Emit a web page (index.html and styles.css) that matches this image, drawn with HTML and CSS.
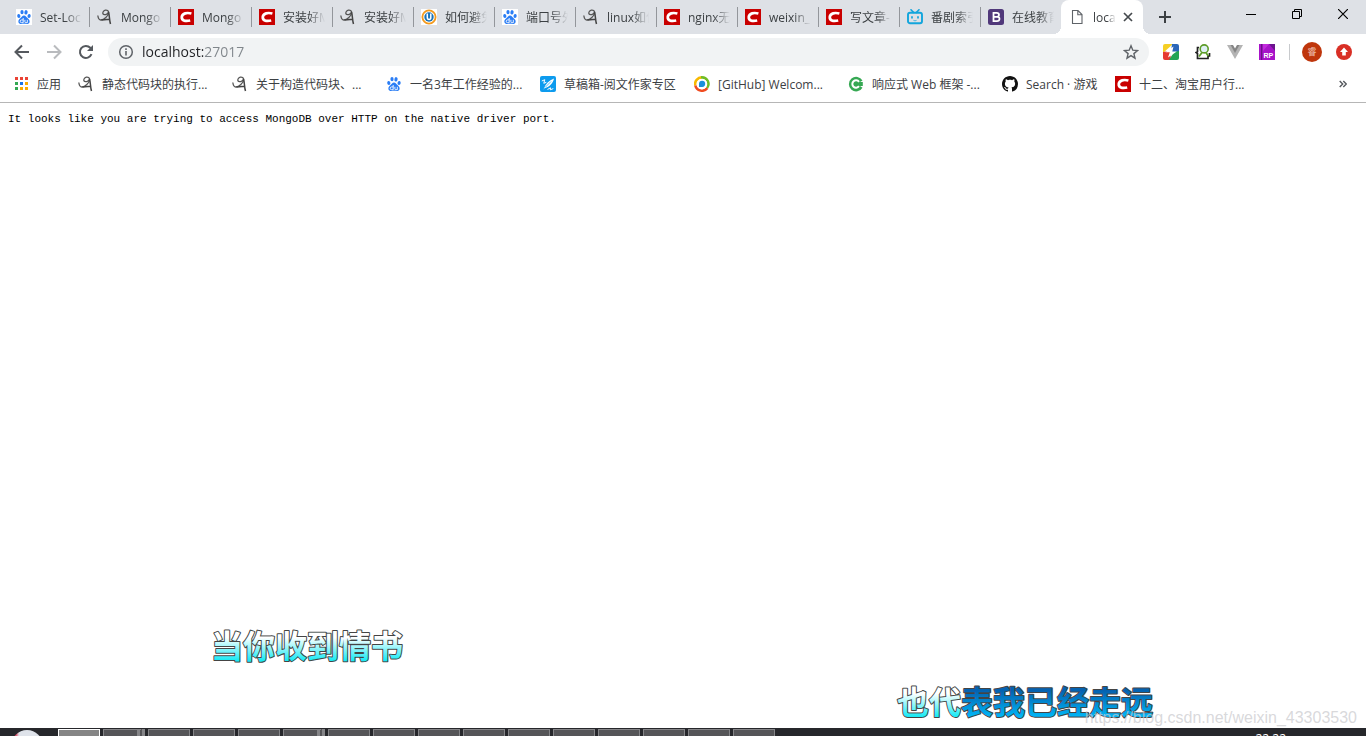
FILE: index.html
```html
<!DOCTYPE html>
<html lang="zh-CN">
<head>
<meta charset="utf-8">
<title>localhost:27017</title>
<link rel="stylesheet" href="styles.css">
</head>
<body>
<svg class="sprite" aria-hidden="true">
  <symbol id="baidu" viewBox="0 0 16 16">
    <g fill="#2a7df5">
      <ellipse cx="2.8" cy="7" rx="1.6" ry="2.1" transform="rotate(-10 2.8 7)"/>
      <ellipse cx="6" cy="3.1" rx="1.6" ry="2.2"/>
      <ellipse cx="10" cy="3.3" rx="1.6" ry="2.2" transform="rotate(12 10 3.3)"/>
      <ellipse cx="13.1" cy="7" rx="1.6" ry="2.1" transform="rotate(10 13.1 7)"/>
      <path d="M8 6.4c1.7 0 2.4 1.6 3.4 2.7 1.200 1.200 2.500 2 2.200 3.900-.3 1.800-2 2.200-3.300 2-1.500-.2-3-.2-4.600 0-1.300.2-3-.2-3.300-2-.3-1.900 1-2.700 2.200-3.900C5.600 8 6.300 6.400 8 6.400z"/>
    </g>
    <path d="M7.200 9v4.700H5.600a1.400 1.400 0 0 1 0-2.800h1.600M8.900 10.800v2c0 .7.300.9.900.9h1.500v-2.900" fill="none" stroke="#fff" stroke-width=".9"/>
  </symbol>
  <symbol id="scribble" viewBox="0 0 16 16">
    <path d="M.8 6.500c.4 2.800 1.600 4.600 3.200 4.500C6.800 10.800 11.600 7 11.600 3.700c0-1.900-1.600-2.900-3.300-2.500C6.400 1.700 5.300 3.600 6 4.900c.9 1.600 4.400.6 5.500-1.700" fill="none" stroke="#555" stroke-width="1.300"/>
    <path d="M11.500 3c1.200 3.500.7 8 2 12M4.500 11l8-.8" fill="none" stroke="#444" stroke-width="1.500"/>
  </symbol>
  <symbol id="csdn" viewBox="0 0 16 16">
    <path fill="#c90000" d="M0 0h16v16H0z"/>
    <path d="M13.400 4.500C9 3.300 4.300 4.200 3.800 7.800c-.4 3.500 3 4.900 8.400 3.700" fill="none" stroke="#fff" stroke-width="2.700"/>
  </symbol>
  <symbol id="ring" viewBox="0 0 16 16">
    <path fill="#fff" d="M0 0h16v16H0z"/>
    <circle cx="8" cy="8" r="6.600" fill="#fff" stroke="#f39a1e" stroke-width="1.800"/>
    <circle cx="8" cy="8" r="4.700" fill="#1872b8"/>
    <path d="M6.300 4.500v4c0 2.600 3.500 2.600 3.500 0v-4" fill="none" stroke="#fff" stroke-width="1.500"/>
  </symbol>
  <symbol id="bili" viewBox="0 0 16 16">
    <path d="M4 .8l2.500 2.600M12 .8L9.500 3.400" stroke="#12a5dc" stroke-width="1.600" stroke-linecap="round"/>
    <rect x="1" y="3.800" width="14" height="10.400" rx="2" fill="none" stroke="#12a5dc" stroke-width="1.900"/>
    <path d="M5 7.300v2.200M11 7.300v2.200" stroke="#12a5dc" stroke-width="1.700"/>
    <path d="M6.500 11.400q.8.700 1.500 0 .8.700 1.500 0" fill="none" stroke="#12a5dc" stroke-width=".8"/>
  </symbol>
  <symbol id="bootstrap" viewBox="0 0 16 16">
    <rect width="16" height="16" rx="2.500" fill="#50387a"/>
    <path d="M5.500 3.900h3.200c3 0 3 3.900.3 3.900H5.500h3.700c3.200 0 3 4.300-.3 4.300H5.500z" fill="none" stroke="#fff" stroke-width="1.800"/>
  </symbol>
  <symbol id="pen" viewBox="0 0 16 16">
    <rect width="16" height="16" rx="2" fill="#0d9bee"/>
    <path d="M4 12.500C5.500 8 9 4.500 14 2.500 13 7 9.800 10.800 4.800 12L3 14" fill="#fff"/>
    <path d="M5.500 11l5.500-5.500" stroke="#0d9bee" stroke-width=".7"/>
    <path d="M1.800 5l3-1.300-1 3.600 2.500-1M7.500 13.500l3-1.700-.2 2 3-1.200" fill="none" stroke="#fff"/>
  </symbol>
  <symbol id="swirl" viewBox="0 0 16 16">
    <path d="M1.300 9.500A6.700 6.700 0 0 1 8 1.400" fill="none" stroke="#f8b900" stroke-width="2.600"/>
    <path d="M7 1.400a6.600 6.600 0 0 1 6 10.600" fill="none" stroke="#71bd25" stroke-width="2.600"/>
    <path d="M1.300 9.500a6.900 6.900 0 0 0 12 2.700" fill="none" stroke="#f04b20" stroke-width="2.600"/>
    <circle cx="8" cy="8" r="5.200" fill="#fff"/>
    <path d="M5 11V7.800A3.100 3.100 0 1 1 8.200 11z" fill="#198fda"/>
  </symbol>
  <symbol id="greenc" viewBox="0 0 16 16">
    <path d="M14.500 4.500A7.300 7.300 0 1 0 14.500 11.800L12 10h2.800V6H12z" fill="#36a853"/>
    <path d="M11 5.800a3.700 3.700 0 1 0 0 4.400" fill="none" stroke="#fff" stroke-width="2"/>
  </symbol>
  <symbol id="github" viewBox="0 0 16 16">
    <path fill="#111" d="M8 0C3.580 0 0 3.580 0 8c0 3.540 2.290 6.530 5.470 7.590.4.070.55-.17.55-.38 0-.19-.01-.82-.01-1.490-2.010.37-2.530-.49-2.690-.94-.09-.23-.48-.94-.82-1.130-.28-.15-.68-.52-.01-.53.63-.01 1.080.58 1.230.82.72 1.210 1.870.87 2.330.66.07-.52.28-.87.51-1.070-1.780-.2-3.640-.89-3.640-3.950 0-.87.31-1.590.82-2.150-.08-.2-.36-1.020.08-2.120 0 0 .67-.21 2.200.82.64-.18 1.320-.27 2-.27s1.360.09 2 .27c1.530-1.040 2.200-.82 2.200-.82.44 1.100.16 1.920.08 2.120.51.56.82 1.270.82 2.150 0 3.070-1.870 3.750-3.650 3.950.29.25.54.73.54 1.480 0 1.070-.01 1.930-.01 2.200 0 .21.15.46.55.38A8 8 0 0 0 16 8c0-4.420-3.580-8-8-8z"/>
  </symbol>
  <symbol id="apps" viewBox="0 0 16 16">
    <path fill="#ea4335" d="M2 1h3v3H2zM7 1h3v3H7zM12 1h3v3h-3z"/>
    <path fill="#34a853" d="M2 6h3v3H2zM2 11h3v3H2z"/>
    <path fill="#1a73e8" d="M7 6h3v3H7z"/>
    <path fill="#fbab00" d="M12 6h3v3h-3zM7 11h3v3H7zM12 11h3v3h-3z"/>
  </symbol>
</svg>

<header class="chrome">
  <div class="tab-strip">
    <nav class="tabs" aria-label="标签页">
      <a class="tab" href="#"><svg class="icon on-white"><use href="#baidu"/></svg><span class="tab-title">Set-Loc</span></a>
      <a class="tab" href="#"><svg class="icon"><use href="#scribble"/></svg><span class="tab-title">Mongo</span></a>
      <a class="tab" href="#"><svg class="icon"><use href="#csdn"/></svg><span class="tab-title">Mongo</span></a>
      <a class="tab" href="#"><svg class="icon"><use href="#csdn"/></svg><span class="tab-title">安装好M</span></a>
      <a class="tab" href="#"><svg class="icon"><use href="#scribble"/></svg><span class="tab-title">安装好M</span></a>
      <a class="tab" href="#"><svg class="icon"><use href="#ring"/></svg><span class="tab-title">如何避免</span></a>
      <a class="tab" href="#"><svg class="icon on-white"><use href="#baidu"/></svg><span class="tab-title">端口号外</span></a>
      <a class="tab" href="#"><svg class="icon"><use href="#scribble"/></svg><span class="tab-title">linux如何</span></a>
      <a class="tab" href="#"><svg class="icon"><use href="#csdn"/></svg><span class="tab-title">nginx无</span></a>
      <a class="tab" href="#"><svg class="icon"><use href="#csdn"/></svg><span class="tab-title">weixin_</span></a>
      <a class="tab" href="#"><svg class="icon"><use href="#csdn"/></svg><span class="tab-title">写文章-</span></a>
      <a class="tab" href="#"><svg class="icon"><use href="#bili"/></svg><span class="tab-title">番剧索引</span></a>
      <a class="tab last" href="#"><svg class="icon"><use href="#bootstrap"/></svg><span class="tab-title">在线教育</span></a>
      <div class="tab active">
        <svg class="icon" viewBox="0 0 16 16"><path d="M3.500 1.500h5.500L13 5.500v9H3.500zM8.800 1.500v4.200H13" fill="none" stroke="#5f6368" stroke-width="1.100"/></svg>
        <span class="tab-title">localhost</span>
        <button class="tab-close" aria-label="关闭标签页"><svg viewBox="0 0 10 10"><path d="M1 1l8 8M9 1L1 9" stroke="#45494d" stroke-width="1.700"/></svg></button>
      </div>
      <button class="new-tab" aria-label="新标签页"><svg viewBox="0 0 12 12"><path d="M6 0v12M0 6h12" stroke="#3c4043" stroke-width="2"/></svg></button>
    </nav>
    <div class="window-controls">
      <button aria-label="最小化"><svg viewBox="0 0 10 10"><path d="M0 5.500h10" stroke="#000"/></svg></button>
      <button aria-label="还原"><svg viewBox="0 0 10 10"><path d="M.5 2.500h7v7h-7zM2.500 2.500v-2h7v7h-2" fill="none" stroke="#000"/></svg></button>
      <button aria-label="关闭"><svg viewBox="0 0 10 10"><path d="M0 0l10 10M10 0L0 10" stroke="#000" stroke-width="1.200"/></svg></button>
    </div>
  </div>

  <div class="toolbar">
    <button class="tool" aria-label="后退"><svg viewBox="0 0 16 16"><path d="M15 8H2M8 1.500L1.500 8 8 14.500" fill="none" stroke="#55595e" stroke-width="2"/></svg></button>
    <button class="tool" aria-label="前进"><svg viewBox="0 0 16 16"><path d="M1 8h13M8 1.500L14.500 8 8 14.500" fill="none" stroke="#b9bbbe" stroke-width="2"/></svg></button>
    <button class="tool" aria-label="重新加载"><svg viewBox="0 0 16 16"><path d="M13.500 10.200A6 6 0 1 1 12.300 3.800L14 5.500" fill="none" stroke="#55595e" stroke-width="2"/><path d="M15 1v6H9z" fill="#55595e"/></svg></button>
    <div class="omnibox">
      <svg class="info" viewBox="0 0 16 16"><circle cx="8" cy="8" r="6.300" fill="none" stroke="#5f6368" stroke-width="1.500"/><path d="M8 7v4.500M8 4.300V6" stroke="#5f6368" stroke-width="1.600"/></svg>
      <input class="url" type="text" value="localhost:27017" aria-label="地址栏">
      <button class="star" aria-label="添加书签"><svg viewBox="0 0 16 16"><path d="M8 1.800l1.800 4.400 4.700.4-3.600 3 1.100 4.600L8 11.700l-4 2.500 1.100-4.600-3.600-3 4.700-.4z" fill="none" stroke="#5f6368" stroke-width="1.400"/></svg></button>
    </div>
    <div class="extensions">
      <button aria-label="闪电扩展"><svg viewBox="0 0 16 16"><path fill="#f5cf25" d="M2 0h8L0 9V2a2 2 0 0 1 2-2z"/><path fill="#e63a31" d="M0 8l7-1 1 9H2a2 2 0 0 1-2-2z"/><path fill="#2b66b8" d="M9 0h5a2 2 0 0 1 2 2v7l-8-1z"/><path fill="#23a455" d="M16 7v7a2 2 0 0 1-2 2H6l5-8z"/><path fill="#fff" d="M10.500 2.500L2.500 8.300h4.300L5 13.500l8.800-6H9.300z"/></svg></button>
      <button aria-label="查找扩展"><svg viewBox="0 0 16 16"><path d="M4 3.500H2.500v4L1 8.500l1.500 1v5H13v-2.500h1.500V9" fill="none" stroke="#222" stroke-width="1.700"/><circle cx="9.200" cy="4.900" r="4" fill="#dff0f5" stroke="#5d9c28" stroke-width="1.600"/><path d="M7 8.500L4 12.500M11 8.800l2.300 3.200" stroke="#5d9c28" stroke-width="1.800"/></svg></button>
      <button aria-label="Vue"><svg viewBox="0 0 16 16"><path fill="#b4b4b4" d="M0 1h4l4 7 4-7h4L8 15z"/><path fill="#858585" d="M3.500 1H6l2 3.500L10 1h2.500L8 9z"/></svg></button>
      <button aria-label="Axure RP"><svg viewBox="0 0 16 16"><path fill="#a813c9" d="M0 0h16v16H0z"/><path fill="#c22bdc" d="M4 0h6L4 7z"/><path fill="#6c148e" d="M10 0h6v7z"/><path d="M2.700 0v16" stroke="#5c1375"/><text class="rp" x="4.500" y="14.200">RP</text></svg></button>
    </div>
    <div class="profile">
      <button class="avatar" aria-label="用户">睿</button>
      <button class="update" aria-label="更新"><svg viewBox="0 0 16 16"><circle cx="8" cy="8" r="8" fill="#d92f25"/><path fill="#fff" d="M8 3.500L12 8H9.800v3.500H6.200V8H4z"/></svg></button>
    </div>
  </div>

  <nav class="bookmarks" aria-label="书签">
    <a class="bookmark apps" href="#"><svg class="icon"><use href="#apps"/></svg><span>应用</span></a>
    <a class="bookmark" href="#"><svg class="icon"><use href="#scribble"/></svg><span>静态代码块的执行...</span></a>
    <a class="bookmark" href="#"><svg class="icon"><use href="#scribble"/></svg><span>关于构造代码块、...</span></a>
    <a class="bookmark" href="#"><svg class="icon"><use href="#baidu"/></svg><span>一名3年工作经验的...</span></a>
    <a class="bookmark" href="#"><svg class="icon"><use href="#pen"/></svg><span>草稿箱-阅文作家专区</span></a>
    <a class="bookmark" href="#"><svg class="icon"><use href="#swirl"/></svg><span>[GitHub] Welcom...</span></a>
    <a class="bookmark" href="#"><svg class="icon"><use href="#greenc"/></svg><span>响应式 Web 框架 -...</span></a>
    <a class="bookmark short" href="#"><svg class="icon"><use href="#github"/></svg><span>Search · 游戏</span></a>
    <a class="bookmark" href="#"><svg class="icon"><use href="#csdn"/></svg><span>十二、淘宝用户行...</span></a>
    <button class="more" aria-label="更多书签"><svg viewBox="0 0 8 8"><path d="M.7 1l3 3-3 3M4.300 1l3 3-3 3" fill="none" stroke="#55595e" stroke-width="1.400"/></svg></button>
  </nav>
</header>

<main class="page">
  <pre class="message">It looks like you are trying to access MongoDB over HTTP on the native driver port.</pre>
</main>

<footer class="taskbar">
  <button class="start" aria-label="开始"></button>
  <div class="tasks">
    <button class="task current" aria-label="窗口 1"></button>
    <button class="task stack" aria-label="窗口 2"></button>
    <button class="task" aria-label="窗口 3"></button>
    <button class="task" aria-label="窗口 4"></button>
    <button class="task" aria-label="窗口 5"></button>
    <button class="task stack" aria-label="窗口 6"></button>
    <button class="task" aria-label="窗口 7"></button>
    <button class="task" aria-label="窗口 8"></button>
    <button class="task" aria-label="窗口 9"></button>
    <button class="task" aria-label="窗口 10"></button>
    <button class="task" aria-label="窗口 11"></button>
    <button class="task" aria-label="窗口 12"></button>
    <button class="task" aria-label="窗口 13"></button>
    <button class="task" aria-label="窗口 14"></button>
    <button class="task" aria-label="窗口 15"></button>
    <button class="task" aria-label="窗口 16"></button>
  </div>
  <time class="clock">22:22</time>
</footer>

<svg class="lyric first" viewBox="0 0 200 44">
  <defs><linearGradient id="pale" gradientUnits="userSpaceOnUse" x1="0" y1="8" x2="0" y2="36"><stop offset=".2" stop-color="#fff"/><stop offset="1" stop-color="#1ceaf5"/></linearGradient></defs>
  <text x="4" y="34" fill="url(#pale)">当你收到情书</text>
</svg>
<svg class="lyric second" viewBox="0 0 264 44">
  <defs><linearGradient id="deep" gradientUnits="userSpaceOnUse" x1="0" y1="8" x2="0" y2="36"><stop offset=".1" stop-color="#0562b0"/><stop offset="1" stop-color="#00b4f5"/></linearGradient></defs>
  <text x="4" y="34"><tspan fill="url(#pale)">也代</tspan><tspan fill="url(#deep)">表我已经走远</tspan></text>
</svg>
<div class="watermark">https://blog.csdn.net/weixin_43303530</div>
</body>
</html>
```

FILE: styles.css
```css
* { box-sizing: border-box; }

body {
  margin: 0;
  min-height: 100vh;
  display: flex;
  flex-direction: column;
  position: relative;
  background: #fff;
  color: #3c4043;
  font: 12px/16px "Open Sans", "Noto Sans CJK SC", sans-serif;
}

button {
  display: flex;
  align-items: center;
  justify-content: center;
  padding: 0;
  border: 0;
  background: none;
  font: inherit;
}

a { color: inherit; text-decoration: none; }

.sprite { position: absolute; width: 0; height: 0; }
.icon { flex: none; width: 16px; height: 16px; }
.on-white { background: #fff; }

/* Tabs */
.tab-strip {
  display: flex;
  justify-content: space-between;
  height: 34px;
  background: #dee1e6;
}

.tabs { display: flex; flex: 1; min-width: 0; padding-left: 8px; }

.tab {
  display: flex;
  align-items: center;
  gap: 8px;
  flex: 0 1 81px;
  min-width: 0;
  padding: 0 7px 0 8px;
  position: relative;
}

.tab::after {
  content: "";
  position: absolute;
  right: -1px;
  top: 7px;
  width: 1px;
  height: 20px;
  background: #93969b;
}

.tab.last::after { display: none; }

.tab-title {
  flex: 1;
  min-width: 0;
  padding-top: 2px;
  overflow: hidden;
  white-space: nowrap;
  mask-image: linear-gradient(90deg, #000 60%, transparent);
}

.tab.active {
  flex-basis: 82px;
  background: #fff;
  border-radius: 8px 8px 0 0;
}

.tab.active::before,
.tab.active::after {
  content: "";
  position: absolute;
  top: auto;
  bottom: 0;
  width: 8px;
  height: 8px;
}

.tab.active::before { left: -8px; background: radial-gradient(circle at 0 0, transparent 8px, #fff 8px); }
.tab.active::after { right: -8px; background: radial-gradient(circle at 100% 0, transparent 8px, #fff 8px); }

.tab-close { flex: none; width: 16px; height: 16px; margin-left: -4px; }
.tab-close svg { width: 10px; height: 10px; }
.new-tab { width: 28px; height: 34px; margin-left: 8px; }
.new-tab svg { width: 12px; height: 12px; }

.window-controls { display: flex; }
.window-controls button { width: 46px; height: 28px; }
.window-controls svg { width: 10px; height: 10px; }

/* Toolbar */
.toolbar { display: flex; align-items: center; height: 36px; padding: 0 14px 0 6px; }
.tool { width: 32px; height: 28px; }
.tool svg { width: 16px; height: 16px; }

.omnibox {
  display: flex;
  align-items: center;
  gap: 8px;
  flex: 1;
  min-width: 0;
  height: 28px;
  margin-left: 6px;
  padding: 0 10px;
  border-radius: 14px;
  background: #f1f3f4;
}

.info, .star, .star svg { flex: none; width: 16px; height: 16px; }

.url {
  flex: 1;
  min-width: 0;
  padding: 0;
  border: 0;
  outline: 0;
  color: #202124;
  font: 14px/20px "Open Sans", sans-serif;
  background: linear-gradient(90deg, #202124 61px, #80868b 61px);
  background-clip: text;
  -webkit-text-fill-color: transparent;
}

.extensions {
  display: flex;
  align-items: center;
  gap: 16px;
  height: 16px;
  margin-left: 14px;
  padding-right: 14px;
  border-right: 1px solid #c8cacd;
}

.extensions svg { width: 16px; height: 16px; }
.rp { font: bold 7px "Liberation Sans", sans-serif; fill: #fff; }

.profile { display: flex; align-items: center; gap: 14px; margin-left: 12px; }
.avatar { width: 20px; height: 20px; border-radius: 50%; background: #bf360c; color: #f0c4b5; font-size: 9px; }
.update, .update svg { width: 16px; height: 16px; }

/* Bookmarks */
.bookmarks {
  display: flex;
  align-items: center;
  height: 33px;
  padding: 0 19px 4px 13px;
  border-bottom: 1px solid #b6b6b6;
}

.bookmark {
  display: flex;
  align-items: center;
  gap: 8px;
  flex: 0 1 154px;
  min-width: 0;
  white-space: nowrap;
}

.bookmark span { padding-top: 2px; }
.bookmark.apps { flex: 0 0 65px; gap: 8px; }
.bookmark.short { flex-basis: 113px; }
.more { margin-left: auto; }
.more svg { width: 8px; height: 8px; }

/* Page */
.page { flex: 1; padding: 8px; }
.message { margin: 0; color: #000; font: 11px/16px "Liberation Mono", monospace; white-space: pre-wrap; }

/* Floating lyrics and watermark */
.lyric { position: absolute; height: 44px; pointer-events: none; }
.lyric text {
  font: bold 32px "Noto Sans CJK SC", sans-serif;
  stroke: #444;
  stroke-width: 2px;
  stroke-linejoin: round;
  paint-order: stroke;
}
.first { left: 207px; bottom: 68px; width: 200px; }
.second { right: 209px; bottom: 12px; width: 264px; }

.watermark {
  position: absolute;
  right: 9px;
  bottom: 9px;
  color: rgba(200, 200, 204, .7);
  font: 16px/18px "Liberation Sans", sans-serif;
}

/* Taskbar, mostly below the window edge */
.taskbar {
  display: flex;
  align-items: flex-start;
  height: 8px;
  overflow: hidden;
  background: #26272b;
}

.start {
  width: 32px;
  height: 32px;
  margin: 2px 15px 0 11px;
  border-radius: 50%;
  background: linear-gradient(90deg, #d94e68 5px, #dfe3ea 8px);
}

.tasks { display: flex; gap: 3px; margin-top: 1px; }

.task {
  width: 42px;
  height: 38px;
  border: 1px solid #858588;
  background: #555558;
}

.current { border-color: #fff; background: #858585; }
.stack { border-right: 8px double #858588; }
.clock { margin: 3px 80px 0 auto; color: #fff; }
```
